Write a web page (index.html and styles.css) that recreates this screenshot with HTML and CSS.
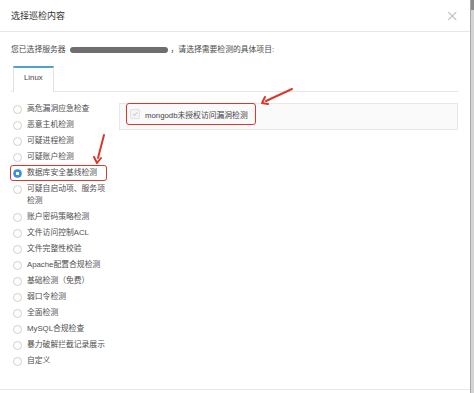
FILE: index.html
```html
<!DOCTYPE html>
<html lang="zh-CN">
<head>
    <meta charset="UTF-8">
    <title>选择巡检内容</title>
    <link rel="stylesheet" href="styles.css">
</head>
<body>
    <div class="screen">
        <div class="modal">
            <div class="modal-header">
                <span class="modal-title">选择巡检内容</span>
                <span class="modal-close">&times;</span>
            </div>

            <div class="modal-body">
                <p class="intro">您已选择服务器 <span class="masked"></span> ，请选择需要检测的具体项目:</p>

                <div class="tabs">
                    <div class="tab active">Linux</div>
                </div>

                <div class="tab-content">
                    <ul class="radio-list">
                        <li class="radio-item"><span class="radio"></span><span>高危漏洞应急检查</span></li>
                        <li class="radio-item"><span class="radio"></span><span>恶意主机检测</span></li>
                        <li class="radio-item"><span class="radio"></span><span>可疑进程检测</span></li>
                        <li class="radio-item"><span class="radio"></span><span>可疑账户检测</span></li>
                        <li class="radio-item selected"><span class="radio checked"></span><span>数据库安全基线检测</span></li>
                        <li class="radio-item"><span class="radio"></span><span>可疑自启动项、服务项检测</span></li>
                        <li class="radio-item"><span class="radio"></span><span>账户密码策略检测</span></li>
                        <li class="radio-item"><span class="radio"></span><span>文件访问控制ACL</span></li>
                        <li class="radio-item"><span class="radio"></span><span>文件完整性校验</span></li>
                        <li class="radio-item"><span class="radio"></span><span>Apache配置合规检测</span></li>
                        <li class="radio-item"><span class="radio"></span><span>基础检测（免费）</span></li>
                        <li class="radio-item"><span class="radio"></span><span>弱口令检测</span></li>
                        <li class="radio-item"><span class="radio"></span><span>全面检测</span></li>
                        <li class="radio-item"><span class="radio"></span><span>MySQL合规检查</span></li>
                        <li class="radio-item"><span class="radio"></span><span>暴力破解拦截记录展示</span></li>
                        <li class="radio-item"><span class="radio"></span><span>自定义</span></li>
                    </ul>

                    <div class="check-panel">
                        <label class="check-item">
                            <span class="checkbox">
                                <svg viewBox="0 0 10 10"><path d="M2.5 5.2l1.8 1.8 3.4-4"/></svg>
                            </span>
                            mongodb未授权访问漏洞检测
                        </label>
                    </div>
                </div>

                <!-- annotation arrows -->
                <svg class="arrows" width="470" height="393" viewBox="0 0 470 393">
                    <path d="M292 89L266 101"/>
                    <path d="M262 103l3-6M262 103l6 1"/>
                    <path d="M104 135L98 158"/>
                    <path d="M97 163l-3-6M97 163l4-5"/>
                </svg>
            </div>

            <div class="modal-footer"></div>
        </div>
        <div class="scrollbar"><div class="scrollbar-top"></div></div>
    </div>
</body>
</html>
```

FILE: styles.css
```css
body {
    margin: 0;
    font-family: "Liberation Sans", "Noto Sans CJK SC", sans-serif;
    background: #ffffff;
    color: #555555;
}

.screen {
    display: flex;
    height: 393px;
    overflow: hidden;
}

.modal {
    flex: 1;
    display: flex;
    flex-direction: column;
    position: relative;
}

/* Header */
.modal-header {
    height: 31px;
    display: flex;
    align-items: center;
    justify-content: space-between;
    padding: 0 11px;
    border-bottom: 1px solid #e6e6e6;
}

.modal-title {
    font-size: 9px;
    color: #333333;
}

.modal-close {
    font-size: 16px;
    font-weight: 300;
    color: #b0b0b0;
    font-family: "DejaVu Sans", sans-serif;
}

/* Body */
.modal-body {
    flex: 1;
    padding: 12px 12px 0 11px;
}

.intro {
    margin: 0;
    font-size: 7.8px;
    line-height: 12px;
    color: #4a4a4a;
    display: flex;
    align-items: center;
}

.masked {
    display: inline-block;
    width: 98px;
    height: 6px;
    margin: 0 3px 0 4px;
    border-radius: 3px;
    background: #6e6e6e;
}

.tabs {
    display: flex;
    margin-top: 10px;
    padding-left: 2px;
    border-bottom: 1px solid #e6e6e6;
}

.tab {
    font-size: 7.8px;
    line-height: 20px;
    padding: 0 10px 4px;
    color: #444444;
    background: #ffffff;
    border: 1px solid #e3e3e3;
    border-top: 2px solid #4ba4c9;
    border-bottom: none;
    margin-bottom: -1px;
}

.tab-content {
    display: flex;
    align-items: flex-start;
}

/* Radio list */
.radio-list {
    list-style: none;
    margin: 0 0 0 -1px;
    padding: 9px 0 0;
    width: 97px;
}

.radio-item {
    display: flex;
    align-items: flex-start;
    gap: 5px;
    padding: 2px 0 2px 3px;
    font-size: 7.8px;
    line-height: 12px;
    color: #4f4f4f;
}

.radio {
    flex: none;
    width: 9px;
    height: 9px;
    margin-top: 1.5px;
    box-sizing: border-box;
    border: 1px solid #d0d0d0;
    border-radius: 50%;
    background: #ffffff;
}

.radio.checked {
    border-color: #3b8ee6;
    background: radial-gradient(circle, #ffffff 0 1.6px, #3b8ee6 2px);
}

.radio-item.selected {
    outline: 1.5px solid #d9382b;
    outline-offset: -1px;
    border-radius: 3px;
    width: 94px;
}

/* Check panel */
.check-panel {
    flex: 1;
    margin: 11px 0 0 12px;
    height: 25px;
    background: #fafafa;
    border: 1px solid #e8e8e8;
    padding-left: 6px;
}

.check-item {
    display: inline-flex;
    align-items: center;
    gap: 5px;
    margin-top: -2px;
    height: 20px;
    padding: 0 7px 0 3px;
    font-size: 7.8px;
    color: #444444;
    border: 1.5px solid #d9382b;
    border-radius: 3px;
}

.checkbox {
    width: 8px;
    height: 8px;
    border: 1px solid #e0e0e0;
    border-radius: 2px;
    background: #f4f4f4;
    display: flex;
}

.checkbox svg {
    width: 8px;
    height: 8px;
    fill: none;
    stroke: #b8b8b8;
    stroke-width: 1.2;
}

/* Arrows drawn over the content */
.arrows {
    position: absolute;
    left: 0;
    top: 0;
    pointer-events: none;
    fill: none;
    stroke: #d9382b;
    stroke-width: 2;
    stroke-linecap: round;
}

.modal-footer {
    height: 3px;
    border-top: 1px solid #e6e6e6;
}

.scrollbar {
    width: 3px;
    border-left: 1px solid #a8a8a8;
    background: #d4d4d4;
}

.scrollbar-top {
    height: 10px;
    background: #8a8a8a;
}
```
